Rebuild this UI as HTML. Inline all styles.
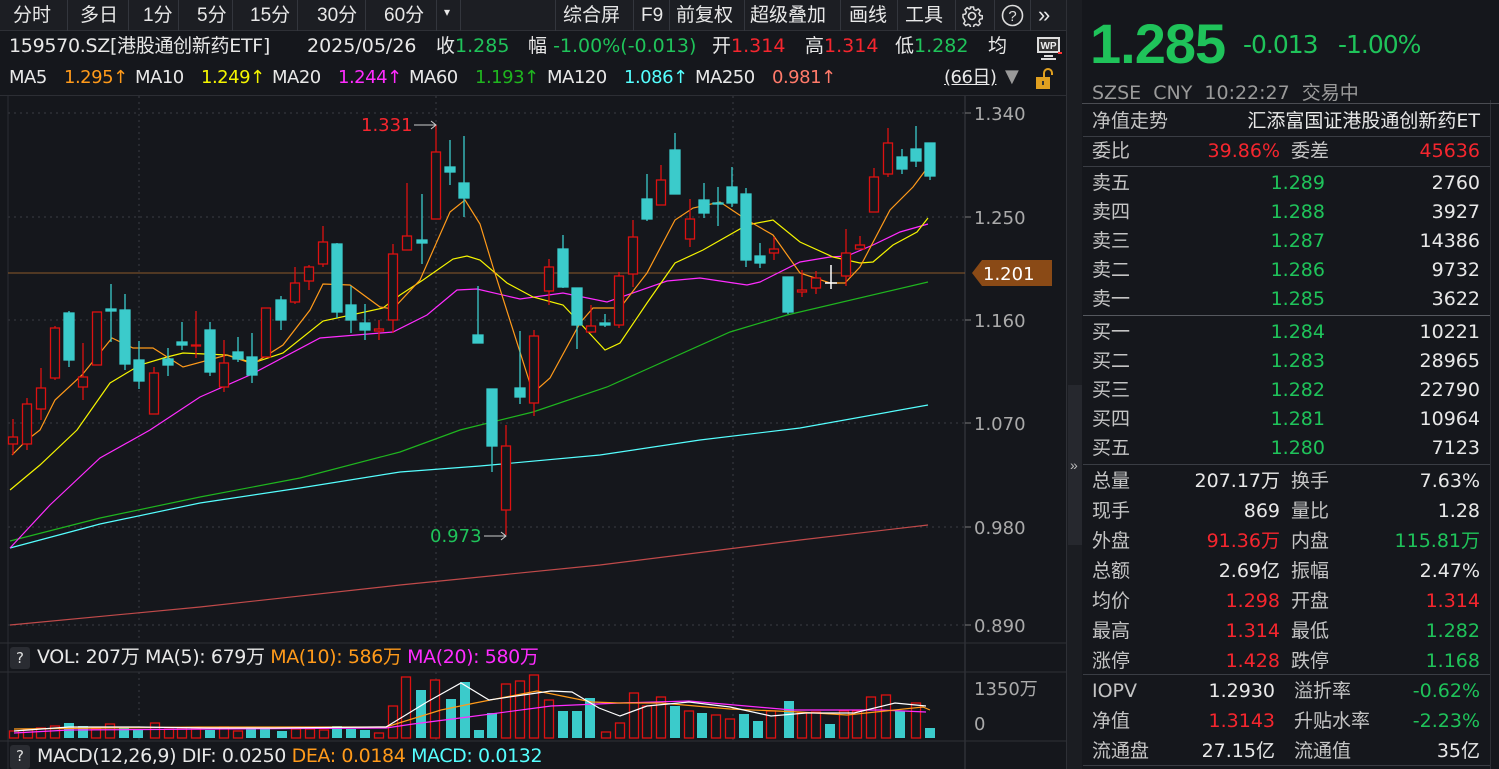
<!DOCTYPE html>
<html><head><meta charset="utf-8">
<style>
*{margin:0;padding:0;box-sizing:border-box}
body{width:1499px;height:769px;background:#15171c;overflow:hidden;position:relative;font-family:"DejaVu Sans","Noto Sans CJK SC",sans-serif;color:#d8d8d8;font-size:19px}
.a{position:absolute;white-space:nowrap;line-height:1}
.t{font-family:"Liberation Sans","Noto Sans CJK SC",sans-serif}
.g{color:#1fc35a}.r{color:#f5262e}.w{color:#e8e8e8}.l{color:#c4c4c4}
.o{color:#ff9a1a}.y{color:#f5f500}.m{color:#ff2cff}.gg{color:#1fb51f}.c{color:#5ff}.s{color:#ff7a6a}
.tb{position:absolute;top:0;height:31px;background:#1c1e23;border-bottom:1px solid #2e3036}
.sep{position:absolute;top:0;width:1px;height:31px;background:#33363d}
.hl{position:absolute;height:1px;background:#3a3d44}
.rt{text-align:right}
.ma{font-size:18px;letter-spacing:-0.5px}
</style></head><body>
<div class="tb" style="left:0;width:1066px"></div>
<div class="sep" style="left:67px"></div><div class="sep" style="left:128px"></div><div class="sep" style="left:178px"></div><div class="sep" style="left:232px"></div><div class="sep" style="left:297px"></div><div class="sep" style="left:365px"></div><div class="sep" style="left:436px"></div><div class="sep" style="left:460px"></div>
<div class="sep" style="left:555px"></div><div class="sep" style="left:633px"></div><div class="sep" style="left:669px"></div><div class="sep" style="left:744px"></div><div class="sep" style="left:840px"></div><div class="sep" style="left:897px"></div><div class="sep" style="left:955px"></div><div class="sep" style="left:994px"></div><div class="sep" style="left:1030px"></div><div class="sep" style="left:1066px"></div>
<div class="a w t" style="left:13px;top:6px;font-size:19px">分时</div>
<div class="a w t" style="left:80px;top:6px;font-size:19px">多日</div>
<div class="a w t" style="left:143px;top:6px;font-size:19px">1分</div>
<div class="a w t" style="left:197px;top:6px;font-size:19px">5分</div>
<div class="a w t" style="left:250px;top:6px;font-size:19px">15分</div>
<div class="a w t" style="left:317px;top:6px;font-size:19px">30分</div>
<div class="a w t" style="left:384px;top:6px;font-size:19px">60分</div>
<div class="a w t" style="left:444px;top:6px;font-size:12px">▾</div>
<div class="a w t" style="left:563px;top:6px;font-size:19px">综合屏</div>
<div class="a w t" style="left:641px;top:6px;font-size:19px">F9</div>
<div class="a w t" style="left:676px;top:6px;font-size:19px">前复权</div>
<div class="a w t" style="left:750px;top:6px;font-size:19px">超级叠加</div>
<div class="a w t" style="left:849px;top:6px;font-size:19px">画线</div>
<div class="a w t" style="left:905px;top:6px;font-size:19px">工具</div>
<svg class="a" style="left:961px;top:5px" width="22" height="22" viewBox="0 0 22 22"><circle cx="11" cy="11" r="3.5" fill="none" stroke="#ddd" stroke-width="1.6"/><path d="M9.5 2h3l.5 2.5 2 .9 2.2-1.4 2.1 2.1-1.4 2.2.9 2 2.5.5v3l-2.5.5-.9 2 1.4 2.2-2.1 2.1-2.2-1.4-2 .9-.5 2.5h-3l-.5-2.5-2-.9-2.2 1.4-2.1-2.1 1.4-2.2-.9-2L2 12.5v-3l2.5-.5.9-2L4 4.8 6.1 2.7 8.3 4.1l1.2-.6z" fill="none" stroke="#ddd" stroke-width="1.5"/></svg>
<svg class="a" style="left:1001px;top:4px" width="23" height="23"><circle cx="11.5" cy="11.5" r="10" fill="none" stroke="#ddd" stroke-width="1.6"/><text x="11.5" y="17" text-anchor="middle" fill="#ddd" font-size="15" font-family="Liberation Sans">?</text></svg>
<div class="a w t" style="left:1038px;top:4px;font-size:22px">»</div>

<div class="a w" style="left:9px;top:37px;letter-spacing:-0.3px">159570.SZ[港股通创新药ETF]</div>
<div class="a w" style="left:307px;top:37px">2025/05/26</div>
<div class="a" style="left:436px;top:37px"><span class="w">收</span><span class="g">1.285</span></div>
<div class="a" style="left:528px;top:37px"><span class="w">幅</span> <span class="g">-1.00%(-0.013)</span></div>
<div class="a" style="left:712px;top:37px"><span class="w">开</span><span class="r">1.314</span></div>
<div class="a" style="left:805px;top:37px"><span class="w">高</span><span class="r">1.314</span></div>
<div class="a" style="left:895px;top:37px"><span class="w">低</span><span class="g">1.282</span></div>
<div class="a w" style="left:988px;top:37px">均</div>
<svg class="a" style="left:1036px;top:36px" width="27" height="25"><rect x="1" y="1" width="23" height="16" fill="#ddd"/><rect x="3" y="3" width="19" height="12" fill="#333"/><text x="12.5" y="13" text-anchor="middle" fill="#eee" font-size="10" font-weight="bold" font-family="Liberation Sans">WP</text><rect x="8" y="19" width="9" height="2" fill="#ddd"/><rect x="5" y="22" width="15" height="2" fill="#ddd"/><rect x="22" y="16" width="4" height="2" fill="#f33"/></svg>

<div class="a w ma" style="left:9px;top:69px">MA5</div><div class="a o ma" style="left:64px;top:69px">1.295↑</div>
<div class="a w ma" style="left:135px;top:69px">MA10</div><div class="a y ma" style="left:201px;top:69px">1.249↑</div>
<div class="a w ma" style="left:272px;top:69px">MA20</div><div class="a m ma" style="left:338px;top:69px">1.244↑</div>
<div class="a w ma" style="left:409px;top:69px">MA60</div><div class="a gg ma" style="left:475px;top:69px">1.193↑</div>
<div class="a w ma" style="left:547px;top:69px">MA120</div><div class="a c ma" style="left:624px;top:69px">1.086↑</div>
<div class="a w ma" style="left:695px;top:69px">MA250</div><div class="a s ma" style="left:772px;top:69px">0.981↑</div>
<div class="a w ma" style="left:944px;top:69px;text-decoration:underline">(66日)</div>
<div class="a" style="left:1005px;top:68px;color:#999;font-size:18px">▼</div>
<svg class="a" style="left:1034px;top:68px" width="22" height="22"><path d="M10 9V5a4 4 0 0 1 8 0v2" fill="none" stroke="#e0a020" stroke-width="2"/><rect x="2" y="9" width="14" height="12" fill="#e0a020"/><rect x="8" y="13" width="2" height="4" fill="#333"/></svg>
<div class="hl" style="left:0;top:95px;width:1066px;background:#2c2e34"></div>

<svg class="a" style="left:0;top:0" width="1068" height="769">
<g stroke="#3a3d44" stroke-dasharray="2,4" stroke-width="1">
<path d="M8 113H965M8 217H965M8 320H965M8 423H965M8 527H965M8 625H965"/>
<path d="M139 96V640M436 96V640M733 96V640M139 672V740M436 672V740M733 672V740"/>
</g>
<path d="M965 96V769" stroke="#3a3d44"/>
<path d="M8 96V769" stroke="#2c2e34"/>
<g fill="#aaa" font-size="18" font-family="DejaVu Sans">
<text x="974" y="120">1.340</text><text x="974" y="224">1.250</text><text x="974" y="327">1.160</text><text x="974" y="430">1.070</text><text x="974" y="534">0.980</text><text x="974" y="632">0.890</text>
<text x="974" y="695" font-family="DejaVu Sans, Noto Sans CJK SC">1350万</text><text x="974" y="730">0</text>
</g>
<path d="M965 113h6M965 217h6M965 320h6M965 423h6M965 527h6M965 625h6" stroke="#777"/>
<path d="M8 273H965" stroke="#8a5a2a" stroke-width="1"/>
<path d="M972 273l10-13h70v26h-70z" fill="#8a4a16"/>
<text x="983" y="280" fill="#fff" font-size="18" font-family="DejaVu Sans">1.201</text>
<g fill="none" stroke-width="1.2">
<polyline stroke="#c04a4a" points="10,625 200,607 400,585 600,565 800,540 928,525"/>
<polyline stroke="#5ff" points="10,548 100,524 200,503 300,488 400,472 480,466 600,455 700,440 800,428 928,405"/>
<polyline stroke="#1fb51f" points="10,541 100,518 200,497 300,478 400,452 460,430 533,412 607,387 730,332 787,315 928,282"/>
<polyline stroke="#ff2cff" points="10,548 50,505 100,458 150,430 200,397 250,375 320,338 393,332 427,315 457,290 477,289 520,299 563,293 607,302 667,281 700,278 747,285 760,282 800,262 830,257 847,256 873,245 900,232 928,224"/>
<polyline stroke="#f5f500" points="10,490 40,465 77,430 110,383 140,365 167,357 183,353 227,355 253,363 283,353 323,321 383,308 400,295 423,280 453,259 467,256 480,260 507,283 533,297 563,305 580,323 605,350 620,343 647,303 675,263 703,250 747,225 773,220 800,242 833,257 860,263 873,262 893,245 917,232 928,218"/>
<polyline stroke="#ff9a1a" points="12,455 27,440 40,430 55,400 82,375 112,338 133,348 153,348 183,367 227,355 253,364 283,345 310,310 323,284 350,285 380,307 393,309 420,280 450,212 465,200 480,224 493,267 533,393 550,378 580,323 593,308 620,308 647,273 675,220 693,208 720,202 747,220 773,235 800,273 830,283 845,283 860,267 890,210 913,187 928,167"/>
</g>
<g stroke-width="1.3">
<g stroke="#dd1111" fill="#15171c">
<path d="M13 419V455M27 398V450M41 368V420M55 326V380M83 343V400M97 312V365M154 367V414M196 311V358M224 340V392M266 308V357M295 267V304M309 265V290M323 226V267M379 320V340M393 244V333M407 183V250M436 125V219M506 425V535M534 330V416M549 259V305M591 305V333M619 272V328M633 220V287M661 165V205M690 199V247M774 237V260M802 270V297M816 271V294M846 229V286M860 236V249M874 168V212M888 128V177"/>
<rect x="8.5" y="437" width="9" height="7"/><rect x="22.5" y="404" width="9" height="40"/><rect x="36.5" y="388" width="9" height="21"/><rect x="50.5" y="328" width="9" height="50"/><rect x="78.5" y="377" width="9" height="10"/><rect x="92.5" y="312" width="9" height="53"/><rect x="149.5" y="373" width="9" height="41"/><rect x="191.5" y="345" width="9" height="1"/><rect x="219.5" y="363" width="9" height="24"/><rect x="261.5" y="308" width="9" height="49"/><rect x="290.5" y="283" width="9" height="19"/><rect x="304.5" y="267" width="9" height="14"/><rect x="318.5" y="242" width="9" height="22"/><rect x="374.5" y="329" width="9" height="2"/><rect x="388.5" y="254" width="9" height="66"/><rect x="402.5" y="236" width="9" height="14"/><rect x="431.5" y="152" width="9" height="67"/><rect x="501.5" y="446" width="9" height="64"/><rect x="529.5" y="336" width="9" height="67"/><rect x="544.5" y="267" width="9" height="24"/><rect x="586.5" y="326" width="9" height="6"/><rect x="614.5" y="276" width="9" height="49"/><rect x="628.5" y="237" width="9" height="37"/><rect x="656.5" y="180" width="9" height="25"/><rect x="685.5" y="219" width="9" height="20"/><rect x="769.5" y="249" width="9" height="4"/><rect x="797.5" y="290" width="9" height="2"/><rect x="811.5" y="278" width="9" height="10"/><rect x="841.5" y="253" width="9" height="23"/><rect x="855.5" y="245" width="9" height="4"/><rect x="869.5" y="177" width="9" height="35"/><rect x="883.5" y="143" width="9" height="31"/>
</g>
<g stroke="#3bcbcb" fill="#3bcbcb">
<path d="M69 311V367M111 284V342M125 294V370M139 341V389M168 348V376M182 322V350M210 322V376M238 337V362M252 333V383M281 296V330M337 243V318M351 286V333M365 304V340M422 194V264M450 140V185M464 136V217M478 286V343M492 389V472M520 331V404M563 235V288M577 288V349M605 314V327M647 174V221M675 133V194M704 183V218M718 187V226M732 167V207M746 188V267M760 243V268M788 277V314M902 149V174M916 126V167M930 143V180"/>
<rect x="64" y="313" width="10" height="47"/><rect x="106" y="309" width="10" height="2"/><rect x="120" y="310" width="10" height="54"/><rect x="134" y="360" width="10" height="21"/><rect x="163" y="359" width="10" height="6"/><rect x="177" y="342" width="10" height="3"/><rect x="205" y="330" width="10" height="42"/><rect x="233" y="352" width="10" height="7"/><rect x="247" y="357" width="10" height="18"/><rect x="276" y="300" width="10" height="20"/><rect x="332" y="244" width="10" height="68"/><rect x="346" y="305" width="10" height="15"/><rect x="360" y="323" width="10" height="7"/><rect x="417" y="240" width="10" height="3"/><rect x="445" y="167" width="10" height="5"/><rect x="459" y="183" width="10" height="15"/><rect x="473" y="335" width="10" height="8"/><rect x="487" y="389" width="10" height="57"/><rect x="515" y="388" width="10" height="9"/><rect x="558" y="249" width="10" height="38"/><rect x="572" y="288" width="10" height="37"/><rect x="600" y="323" width="10" height="2"/><rect x="642" y="199" width="10" height="20"/><rect x="670" y="150" width="10" height="44"/><rect x="699" y="200" width="10" height="13"/><rect x="713" y="203" width="10" height="1"/><rect x="727" y="187" width="10" height="16"/><rect x="741" y="194" width="10" height="66"/><rect x="755" y="256" width="10" height="7"/><rect x="783" y="277" width="10" height="35"/><rect x="897" y="157" width="10" height="12"/><rect x="911" y="149" width="10" height="12"/><rect x="925" y="143" width="10" height="33"/>
</g>
<path d="M831 265V289M825 283H837" stroke="#fff" stroke-width="1.5"/>
</g>
<text x="361" y="131" fill="#f5262e" font-size="18" font-family="DejaVu Sans">1.331</text>
<path d="M414 125H436M431 121l5 4-5 4" stroke="#ccc" fill="none"/>
<text x="430" y="542" fill="#1fc35a" font-size="18" font-family="DejaVu Sans">0.973</text>
<path d="M484 536H506M501 532l5 4-5 4" stroke="#ccc" fill="none"/>

<path d="M0 643H1066M0 672H1066M0 741H1066" stroke="#2e3036"/>
<g stroke="#dd1111" fill="#15171c" stroke-width="1.3">
<rect x="9.5" y="731" width="9" height="7"/><rect x="23.5" y="730" width="9" height="8"/><rect x="36.5" y="728" width="9" height="10"/><rect x="50.5" y="726" width="9" height="12"/><rect x="91.5" y="729" width="9" height="9"/><rect x="105.5" y="724" width="9" height="14"/><rect x="150.5" y="723" width="9" height="15"/><rect x="164.5" y="729" width="9" height="9"/><rect x="177.5" y="728" width="9" height="10"/><rect x="191.5" y="729" width="9" height="9"/><rect x="219.5" y="727" width="9" height="11"/><rect x="233.5" y="731" width="9" height="7"/><rect x="291.5" y="729" width="9" height="9"/><rect x="305.5" y="729" width="9" height="9"/><rect x="319.5" y="730" width="9" height="8"/><rect x="374.5" y="733" width="9" height="5"/><rect x="388.5" y="706" width="9" height="32"/><rect x="401.5" y="677" width="9" height="61"/><rect x="430.5" y="680" width="9" height="58"/><rect x="501.5" y="684" width="9" height="54"/><rect x="515.5" y="681" width="9" height="57"/><rect x="529.5" y="675" width="9" height="63"/><rect x="544.5" y="700" width="9" height="38"/><rect x="601.5" y="732" width="9" height="6"/><rect x="615.5" y="723" width="9" height="15"/><rect x="629.5" y="693" width="9" height="45"/><rect x="642.5" y="706" width="9" height="32"/><rect x="656.5" y="697" width="9" height="41"/><rect x="684.5" y="711" width="9" height="27"/><rect x="711.5" y="715" width="9" height="23"/><rect x="725.5" y="719" width="9" height="19"/><rect x="766.5" y="711" width="9" height="27"/><rect x="797.5" y="713" width="9" height="25"/><rect x="811.5" y="712" width="9" height="26"/><rect x="839.5" y="711" width="9" height="27"/><rect x="852.5" y="711" width="9" height="27"/><rect x="866.5" y="697" width="9" height="41"/><rect x="881.5" y="695" width="9" height="43"/><rect x="911.5" y="703" width="9" height="35"/>
</g>
<g fill="#3bcbcb">
<rect x="64" y="723" width="10" height="15"/><rect x="78" y="726" width="10" height="12"/><rect x="119" y="728" width="10" height="10"/><rect x="133" y="730" width="10" height="8"/><rect x="205" y="730" width="10" height="8"/><rect x="246" y="728" width="10" height="10"/><rect x="260" y="729" width="10" height="9"/><rect x="277" y="731" width="10" height="7"/><rect x="332" y="726" width="10" height="12"/><rect x="346" y="729" width="10" height="9"/><rect x="360" y="730" width="10" height="8"/><rect x="416" y="690" width="10" height="48"/><rect x="446" y="699" width="10" height="39"/><rect x="460" y="682" width="10" height="56"/><rect x="474" y="730" width="10" height="8"/><rect x="487" y="713" width="10" height="25"/><rect x="558" y="711" width="10" height="27"/><rect x="572" y="711" width="10" height="27"/><rect x="585" y="698" width="10" height="40"/><rect x="670" y="706" width="10" height="32"/><rect x="697" y="713" width="10" height="25"/><rect x="739" y="714" width="10" height="24"/><rect x="753" y="721" width="10" height="17"/><rect x="784" y="701" width="10" height="37"/><rect x="825" y="724" width="10" height="14"/><rect x="895" y="711" width="10" height="27"/><rect x="925" y="728" width="10" height="10"/>
</g>
<g fill="none" stroke-width="1.2">
<polyline stroke="#ff2cff" points="14,733 69,730 386,728 413,724 468,717 551,706 620,703 689,701 792,710 881,710 926,712"/>
<polyline stroke="#ff9a1a" points="14,729 200,727 386,727 441,710 475,703 537,691 592,702 620,703 661,703 730,709 799,712 847,715 923,707 930,710"/>
<polyline stroke="#fff" points="14,731 69,727 138,727 207,728 275,728 379,727 386,727 427,702 461,683 489,700 523,695 551,691 572,692 599,708 620,716 647,706 689,702 730,707 771,716 806,713 854,713 895,703 926,706"/>
</g>
</svg>
<div class="a" style="left:10px;top:647px;width:20px;height:22px;background:#2a2c32;border-radius:3px;color:#ddd;text-align:center;line-height:22px;font-size:15px">?</div>
<div class="a" style="left:37px;top:648px;letter-spacing:-0.4px"><span class="w">VOL: 207万 MA(5): 679万 </span><span class="o">MA(10): 586万 </span><span class="m">MA(20): 580万</span></div>
<div class="a" style="left:10px;top:745px;width:20px;height:24px;background:#2a2c32;border-radius:3px;color:#ddd;text-align:center;line-height:22px;font-size:15px">?</div>
<div class="a" style="left:37px;top:747px;letter-spacing:-0.4px"><span class="w">MACD(12,26,9) DIF: 0.0250 </span><span class="o">DEA: 0.0184 </span><span class="c">MACD: 0.0132</span></div>

<div class="a" style="left:1066px;top:0;width:16px;height:769px;background:#1b1d22;border-left:1px solid #2e3036"></div>
<div class="a" style="left:1068px;top:385px;width:14px;height:160px;background:#26282e"></div>
<div class="a t" style="left:1070px;top:458px;color:#bbb;font-size:14px">»</div>
<div class="a" style="left:1490px;top:100px;width:1px;height:669px;background:#2e3036"></div>
<div class="a g t" style="left:1090px;top:16px;font-size:56px;font-weight:bold;letter-spacing:-1px">1.285</div>
<div class="a g" style="left:1243px;top:32px;font-size:25px;letter-spacing:-1px">-0.013</div>
<div class="a g" style="left:1338px;top:32px;font-size:25px;letter-spacing:-1px">-1.00%</div>
<div class="a" style="left:1092px;top:84px;color:#9a9a9a">SZSE&nbsp;&nbsp;CNY&nbsp;&nbsp;10:22:27&nbsp;&nbsp;交易中</div>
<div class="hl" style="left:1082px;top:103px;width:417px;background:#4a4c52"></div>
<div class="hl" style="left:1083px;top:136px;width:407px"></div>
<div class="hl" style="left:1083px;top:166px;width:407px"></div>
<div class="hl" style="left:1083px;top:315px;width:407px;background:#55585e"></div>
<div class="hl" style="left:1083px;top:464px;width:407px"></div>
<div class="hl" style="left:1083px;top:674px;width:407px"></div>
<div class="hl" style="left:1083px;top:765px;width:407px"></div>

<div class="a l" style="left:1092px;top:112px">净值走势</div>
<div class="a w rt" style="left:1200px;top:112px;width:280px">汇添富国证港股通创新药ET</div>
<div class="a l" style="left:1092px;top:142px">委比</div>
<div class="a r rt" style="left:1180px;top:142px;width:100px">39.86%</div>
<div class="a l" style="left:1291px;top:142px">委差</div>
<div class="a r rt" style="left:1380px;top:142px;width:100px">45636</div>

<div class="a l" style="left:1092px;top:174px">卖五</div><div class="a g rt" style="left:1225px;top:174px;width:100px">1.289</div><div class="a w rt" style="left:1380px;top:174px;width:100px">2760</div>
<div class="a l" style="left:1092px;top:203px">卖四</div><div class="a g rt" style="left:1225px;top:203px;width:100px">1.288</div><div class="a w rt" style="left:1380px;top:203px;width:100px">3927</div>
<div class="a l" style="left:1092px;top:232px">卖三</div><div class="a g rt" style="left:1225px;top:232px;width:100px">1.287</div><div class="a w rt" style="left:1380px;top:232px;width:100px">14386</div>
<div class="a l" style="left:1092px;top:261px">卖二</div><div class="a g rt" style="left:1225px;top:261px;width:100px">1.286</div><div class="a w rt" style="left:1380px;top:261px;width:100px">9732</div>
<div class="a l" style="left:1092px;top:290px">卖一</div><div class="a g rt" style="left:1225px;top:290px;width:100px">1.285</div><div class="a w rt" style="left:1380px;top:290px;width:100px">3622</div>
<div class="a l" style="left:1092px;top:323px">买一</div><div class="a g rt" style="left:1225px;top:323px;width:100px">1.284</div><div class="a w rt" style="left:1380px;top:323px;width:100px">10221</div>
<div class="a l" style="left:1092px;top:352px">买二</div><div class="a g rt" style="left:1225px;top:352px;width:100px">1.283</div><div class="a w rt" style="left:1380px;top:352px;width:100px">28965</div>
<div class="a l" style="left:1092px;top:381px">买三</div><div class="a g rt" style="left:1225px;top:381px;width:100px">1.282</div><div class="a w rt" style="left:1380px;top:381px;width:100px">22790</div>
<div class="a l" style="left:1092px;top:410px">买四</div><div class="a g rt" style="left:1225px;top:410px;width:100px">1.281</div><div class="a w rt" style="left:1380px;top:410px;width:100px">10964</div>
<div class="a l" style="left:1092px;top:439px">买五</div><div class="a g rt" style="left:1225px;top:439px;width:100px">1.280</div><div class="a w rt" style="left:1380px;top:439px;width:100px">7123</div>

<div class="a l" style="left:1092px;top:472px">总量</div><div class="a w rt" style="left:1150px;top:472px;width:130px">207.17万</div><div class="a l" style="left:1291px;top:472px">换手</div><div class="a w rt" style="left:1380px;top:472px;width:100px">7.63%</div>
<div class="a l" style="left:1092px;top:502px">现手</div><div class="a w rt" style="left:1150px;top:502px;width:130px">869</div><div class="a l" style="left:1291px;top:502px">量比</div><div class="a w rt" style="left:1380px;top:502px;width:100px">1.28</div>
<div class="a l" style="left:1092px;top:532px">外盘</div><div class="a r rt" style="left:1150px;top:532px;width:130px">91.36万</div><div class="a l" style="left:1291px;top:532px">内盘</div><div class="a g rt" style="left:1350px;top:532px;width:130px">115.81万</div>
<div class="a l" style="left:1092px;top:562px">总额</div><div class="a w rt" style="left:1150px;top:562px;width:130px">2.69亿</div><div class="a l" style="left:1291px;top:562px">振幅</div><div class="a w rt" style="left:1380px;top:562px;width:100px">2.47%</div>
<div class="a l" style="left:1092px;top:592px">均价</div><div class="a r rt" style="left:1150px;top:592px;width:130px">1.298</div><div class="a l" style="left:1291px;top:592px">开盘</div><div class="a r rt" style="left:1380px;top:592px;width:100px">1.314</div>
<div class="a l" style="left:1092px;top:622px">最高</div><div class="a r rt" style="left:1150px;top:622px;width:130px">1.314</div><div class="a l" style="left:1291px;top:622px">最低</div><div class="a g rt" style="left:1380px;top:622px;width:100px">1.282</div>
<div class="a l" style="left:1092px;top:652px">涨停</div><div class="a r rt" style="left:1150px;top:652px;width:130px">1.428</div><div class="a l" style="left:1291px;top:652px">跌停</div><div class="a g rt" style="left:1380px;top:652px;width:100px">1.168</div>

<div class="a l" style="left:1092px;top:682px">IOPV</div><div class="a w rt" style="left:1150px;top:682px;width:125px">1.2930</div><div class="a l" style="left:1294px;top:682px">溢折率</div><div class="a g rt" style="left:1380px;top:682px;width:100px">-0.62%</div>
<div class="a l" style="left:1092px;top:712px">净值</div><div class="a r rt" style="left:1150px;top:712px;width:125px">1.3143</div><div class="a l" style="left:1294px;top:712px">升贴水率</div><div class="a g rt" style="left:1380px;top:712px;width:100px">-2.23%</div>
<div class="a l" style="left:1092px;top:742px">流通盘</div><div class="a w rt" style="left:1150px;top:742px;width:125px">27.15亿</div><div class="a l" style="left:1294px;top:742px">流通值</div><div class="a w rt" style="left:1380px;top:742px;width:100px">35亿</div>
</body></html>
